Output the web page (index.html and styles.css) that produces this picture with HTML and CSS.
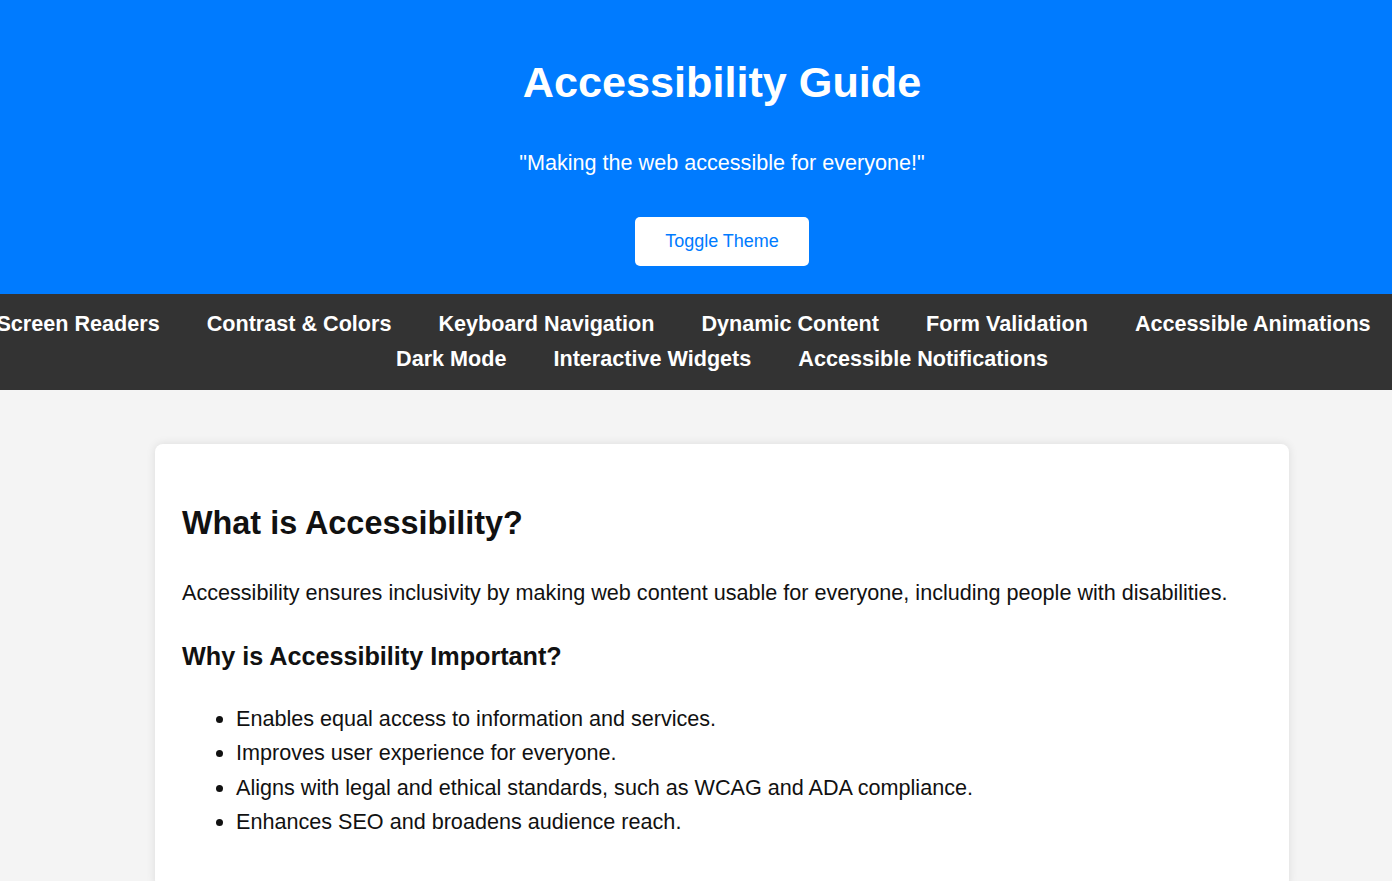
FILE: index.html
```html
<!DOCTYPE html>
<html lang="en">
<head>
<meta charset="utf-8">
<title>Accessibility Guide</title>
<link rel="stylesheet" href="styles.css">
</head>
<body>
<header class="site-header">
  <h1 class="title">Accessibility Guide</h1>
  <p class="tagline">"Making the web accessible for everyone!"</p>
  <button class="theme-toggle" type="button">Toggle Theme</button>
</header>
<nav class="main-nav" aria-label="Topics">
  <ul class="nav-row nav-row-first">
    <li><a href="#screen-readers">Screen Readers</a></li>
    <li><a href="#contrast">Contrast &amp; Colors</a></li>
    <li><a href="#keyboard">Keyboard Navigation</a></li>
    <li><a href="#dynamic">Dynamic Content</a></li>
    <li><a href="#forms">Form Validation</a></li>
    <li><a href="#animations">Accessible Animations</a></li>
  </ul>
  <ul class="nav-row">
    <li><a href="#dark-mode">Dark Mode</a></li>
    <li><a href="#widgets">Interactive Widgets</a></li>
    <li><a href="#notifications">Accessible Notifications</a></li>
  </ul>
</nav>
<main class="content">
  <section class="card">
    <h2 class="card-title">What is Accessibility?</h2>
    <p class="card-text">Accessibility ensures inclusivity by making web content usable for everyone, including people with disabilities.</p>
    <h3 class="card-subtitle">Why is Accessibility Important?</h3>
    <ul class="bullets">
      <li>Enables equal access to information and services.</li>
      <li>Improves user experience for everyone.</li>
      <li>Aligns with legal and ethical standards, such as WCAG and ADA compliance.</li>
      <li>Enhances SEO and broadens audience reach.</li>
    </ul>
  </section>
</main>
</body>
</html>
```

FILE: styles.css
```css
html, body {
  overflow-x: hidden;
}

body {
  margin: 0;
  font-family: "Liberation Sans", Arial, sans-serif;
  font-size: 21.6px;
  line-height: 1.6;
  background: #f4f4f4;
  color: #111;
}

.site-header {
  background: #007bff;
  color: #fff;
  text-align: center;
  padding: 19px 0 18px 52px;
}

.title {
  font-size: 43.2px;
  font-weight: bold;
  margin: 28.9px 0;
}

.tagline {
  margin: 21.6px 0;
}

.theme-toggle {
  display: block;
  margin: 36.5px auto 10.3px;
  padding: 14px 30px;
  font-family: "Liberation Sans", Arial, sans-serif;
  font-size: 18px;
  line-height: normal;
  color: #007bff;
  background: #fff;
  border: none;
  border-radius: 5px;
  cursor: pointer;
}

.main-nav {
  background: #333;
  padding: 13px 0 13.5px 52px;
}

.nav-row {
  list-style: none;
  margin: 0;
  padding: 0;
  display: flex;
  justify-content: center;
  gap: 47px;
  white-space: nowrap;
}

.nav-row-first {
  padding-right: 77px;
}

.nav-row a {
  color: #fff;
  font-weight: bold;
  text-decoration: none;
}

.content {
  padding: 54px 0 40px 52px;
}

.card {
  background: #fff;
  max-width: 1080px;
  margin: 0 auto;
  padding: 27px;
  border-radius: 8px;
  box-shadow: 0 0 10px rgba(0, 0, 0, 0.1);
}

.card-title {
  font-size: 32.4px;
  margin: 26.9px 0;
}

.card-text {
  margin: 21.6px 0;
}

.card-subtitle {
  font-size: 25.2px;
  margin: 25.2px 0;
}

.bullets {
  margin: 21.6px 0;
  padding-left: 54px;
}
```
